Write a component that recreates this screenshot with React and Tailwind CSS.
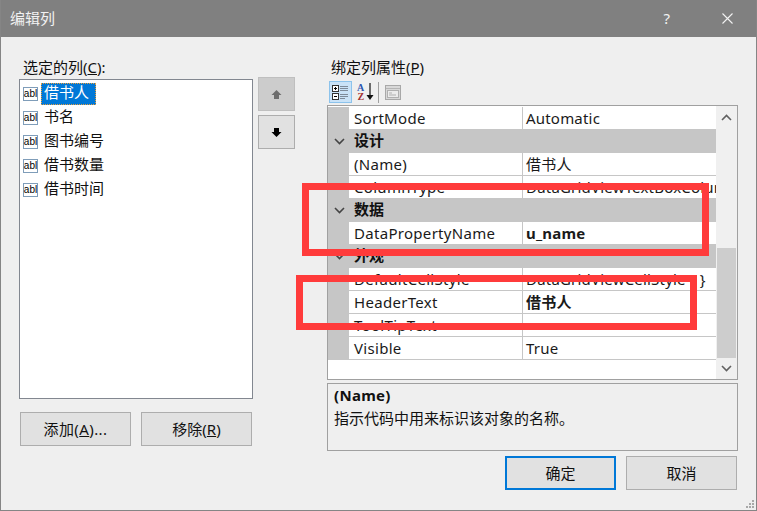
import React from 'react';

const columns = ['借书人', '书名', '图书编号', '借书数量', '借书时间'];

const rows = [
  { name: 'SortMode', value: 'Automatic' },
  { category: '设计' },
  { name: '(Name)', value: '借书人' },
  { name: 'ColumnType', value: 'DataGridViewTextBoxColumn' },
  { category: '数据' },
  { name: 'DataPropertyName', value: 'u_name', bold: true },
  { category: '外观' },
  { name: 'DefaultCellStyle', value: 'DataGridViewCellStyle { }' },
  { name: 'HeaderText', value: '借书人', bold: true },
  { name: 'ToolTipText', value: '' },
  { name: 'Visible', value: 'True' },
];

const Chevron = ({ up, className }) => (
  <svg width="11" height="7" viewBox="0 0 11 7" className={className}>
    <path d={up ? 'M1 6 L5.5 1.5 L10 6' : 'M1 1 L5.5 5.5 L10 1'} fill="none" stroke="currentColor" strokeWidth="1.6" />
  </svg>
);

const MoveArrow = ({ down, color }) => (
  <svg width="11" height="11" viewBox="0 0 11 11">
    <path d={down ? 'M3 1 H8 V5 H10.500 L5.500 10 L0.500 5 H3 Z' : 'M3 10 H8 V6 H10.500 L5.500 1 L0.500 6 H3 Z'} fill={color} />
  </svg>
);

const AblIcon = () => (
  <span className="flex h-[14px] w-[15px] shrink-0 items-center justify-center border border-[#7f9db9] bg-white pb-px font-['Liberation_Sans',sans-serif] text-[10px] leading-none text-black">
    abl
  </span>
);

const DialogButton = ({ children, primary }) => (
  <button
    className={`flex h-[34px] w-[111px] items-center justify-center bg-[#e1e1e1] text-[15px] text-[#111] ${
      primary ? 'border-2 border-[#0078d7]' : 'border border-[#adadad]'
    }`}
  >
    {children}
  </button>
);

const CategorizedIcon = () => (
  <svg width="17" height="16" viewBox="0 0 17 16">
    <rect x="0.500" y="1.500" width="6" height="6" fill="#fff" stroke="#333" />
    <path d="M2 4.500 H5 M3.500 3 V6" stroke="#000" />
    <rect x="0.500" y="9.500" width="6" height="6" fill="#fff" stroke="#333" />
    <path d="M2 12.500 H5" stroke="#000" />
    <path d="M8 2.500 H16 M8 4.500 H16 M8 6.500 H16 M8 10.500 H16 M8 12.500 H16 M8 14.500 H13" stroke="#7d8a99" />
  </svg>
);

const AlphaIcon = () => (
  <svg width="19" height="20" viewBox="0 0 19 20">
    <text x="1" y="9" fontSize="10" fontWeight="700" fontFamily="Liberation Serif, serif" fill="#2a55b0">A</text>
    <text x="1.500" y="18" fontSize="10" fontWeight="700" fontFamily="Liberation Serif, serif" fill="#a33030">Z</text>
    <path d="M14 1 V16" stroke="#111" strokeWidth="1.200" />
    <path d="M10.500 13 H17.500 L14 18 Z" fill="#111" />
  </svg>
);

const PagesIcon = () => (
  <svg width="16" height="15" viewBox="0 0 16 15">
    <rect x="0.500" y="0.500" width="15" height="14" fill="#d8d8d8" stroke="#a8a8a8" />
    <path d="M1 3.500 H15" stroke="#b5b5b5" />
    <rect x="2.500" y="5.500" width="11" height="7" fill="#ececec" stroke="#b0b0b0" />
    <path d="M4 8 H7 M4 10 H11" stroke="#b0b0b0" />
  </svg>
);

const GridRow = ({ row }) => {
  if (row.category) {
    return (
      <div className="flex h-[23px] items-center bg-[#c6c6c6]">
        <div className="flex w-[21px] shrink-0 justify-center pl-px text-[#444]">
          <Chevron />
        </div>
        <span className="pb-[2px] pl-[5px] font-bold text-[#111]">{row.category}</span>
      </div>
    );
  }
  return (
    <div className="flex h-[23px] border-b border-[#c6c6c6] bg-white">
      <div className="w-[21px] shrink-0 bg-[#c6c6c6]" />
      <div className="flex w-[174px] shrink-0 items-center border-r border-[#c6c6c6] pl-[5px] tracking-[0.3px] text-[#1a1a1a]">
        {row.name}
      </div>
      <div
        className={`flex min-w-0 flex-1 items-center overflow-hidden whitespace-nowrap pl-[3px] tracking-[0.2px] text-[#1a1a1a] ${
          row.bold ? 'font-bold' : ''
        }`}
      >
        {row.value}
      </div>
    </div>
  );
};

export default function App() {
  return (
    <div className="relative flex h-[511px] w-[757px] flex-col overflow-hidden border-x border-b border-[#858585] bg-[#efefef] font-['Noto_Sans','Noto_Sans_CJK_SC',sans-serif] text-[15px] text-[#111]">
      {/* Title bar */}
      <div className="-mx-px flex h-[37px] shrink-0 items-center bg-[#808080] pl-[10px] text-[#f2f2f2]">
        <span>编辑列</span>
        <span className="ml-auto mr-[52px]">?</span>
        <svg width="11" height="11" viewBox="0 0 11 11" className="mr-[24px]">
          <path d="M0.500 0.500 L10.500 10.500 M10.500 0.500 L0.500 10.500" stroke="#f2f2f2" strokeWidth="1.100" />
        </svg>
      </div>

      <div className="flex flex-1 pt-[21px]">
        {/* Left side */}
        <div className="w-[326px] shrink-0 pl-[18px]">
          <div className="flex">
            <div className="w-[234px]">
              <div className="h-[21px] pl-[4px] leading-[18px]">
                选定的列(<span className="underline">C</span>):
              </div>
              <div className="h-[320px] border border-[#828790] bg-white pt-[2px] pl-[3px]">
                {columns.map((name, i) => (
                  <div key={name} className="flex h-[24px] items-center">
                    <AblIcon />
                    <span
                      className={`ml-[3px] flex h-[22px] items-center pb-[3px] pl-[2px] ${
                        i === 0 ? 'w-[55px] border border-dotted border-[#e8a040] bg-[#0078d7] text-white' : 'border border-transparent'
                      }`}
                    >
                      {name}
                    </span>
                  </div>
                ))}
              </div>
            </div>
            <div className="ml-[5px] flex flex-col gap-[4px] pt-[19px]">
              <button className="flex h-[34px] w-[37px] items-center justify-center border border-[#bfbfbf] bg-[#cccccc]">
                <MoveArrow color="#6d6d6d" />
              </button>
              <button className="flex h-[34px] w-[37px] items-center justify-center border border-[#adadad] bg-[#e1e1e1]">
                <MoveArrow down color="#000" />
              </button>
            </div>
          </div>
          <div className="mt-[13px] flex gap-[10px] pl-px">
            <DialogButton>
              <span className="tracking-[0.4px]">添加(<span className="underline">A</span>)...</span>
            </DialogButton>
            <DialogButton>
              <span>移除(<span className="underline">R</span>)</span>
            </DialogButton>
          </div>
        </div>

        {/* Right side */}
        <div className="w-[411px] shrink-0">
          <div className="h-[23px] pl-[4px] leading-[18px]">
            绑定列属性(<span className="underline">P</span>)
          </div>
          <div className="flex h-[24px] items-start pl-[2px]">
            <div className="flex h-[22px] w-[23px] items-center justify-center border border-[#8cc3ec] bg-[#c9e2f7]">
              <CategorizedIcon />
            </div>
            <div className="ml-[1px] flex h-[22px] w-[24px] items-center justify-center">
              <AlphaIcon />
            </div>
            <div className="ml-px mt-px h-[21px] w-px bg-[#a0a0a0]" />
            <div className="ml-[6px] flex h-[22px] items-center">
              <PagesIcon />
            </div>
          </div>

          {/* Property grid */}
          <div className="flex h-[275px] border border-[#a0a0a0] bg-white">
            <div className="w-[388px] shrink-0 pt-px">
              {rows.map((row) => (
                <GridRow key={row.name || row.category} row={row} />
              ))}
            </div>
            <div className="flex w-[21px] flex-col bg-[#f0f0f0]">
              <div className="flex h-[21px] items-center justify-center pt-[2px] text-[#606060]">
                <Chevron up />
              </div>
              <div className="mt-auto h-[110px] w-[19px] self-center bg-[#cdcdcd]" />
              <div className="flex h-[21px] items-center justify-center text-[#606060]">
                <Chevron />
              </div>
            </div>
          </div>

          {/* Description */}
          <div className="mt-[3px] h-[68px] border border-[#a0a0a0] px-[6px]">
            <div className="h-[24px] font-bold leading-[22px] tracking-[0.3px]">(Name)</div>
            <div className="leading-[20px]">指示代码中用来标识该对象的名称。</div>
          </div>

          <div className="mt-[5px] flex gap-[10px] pl-[178px]">
            <DialogButton primary>确定</DialogButton>
            <DialogButton>取消</DialogButton>
          </div>
        </div>
      </div>

      {/* Resize grip */}
      <svg width="10" height="10" viewBox="0 0 10 10" className="absolute bottom-[1px] right-[1px]" fill="#a8a8a8">
        <rect x="7" y="1" width="2" height="2" />
        <rect x="4" y="4" width="2" height="2" />
        <rect x="7" y="4" width="2" height="2" />
        <rect x="1" y="7" width="2" height="2" />
        <rect x="4" y="7" width="2" height="2" />
        <rect x="7" y="7" width="2" height="2" />
      </svg>

      {/* Red annotation boxes drawn on top of the screenshot */}
      <div className="pointer-events-none absolute left-[301px] top-[183px] h-[73px] w-[407px] border-[7px] border-[#ff3b3b]" />
      <div className="pointer-events-none absolute left-[295px] top-[275px] h-[55px] w-[401px] border-[7px] border-[#ff3b3b]" />
    </div>
  );
}
